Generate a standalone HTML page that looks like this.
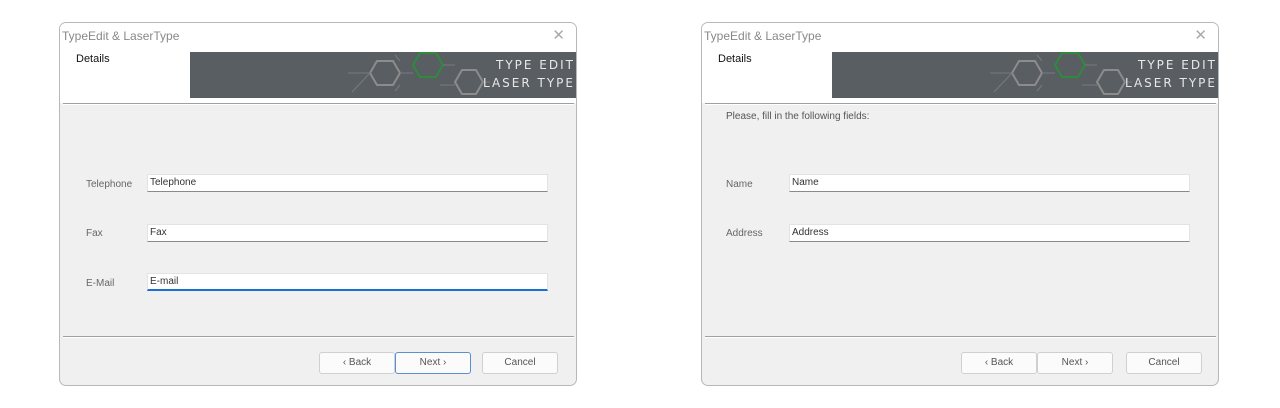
<!DOCTYPE html>
<html><head><style>
*{margin:0;padding:0;box-sizing:border-box}
body{width:1280px;height:408px;background:#fff;position:relative;font-family:"Liberation Sans",sans-serif;overflow:hidden}
.dlg{position:absolute;top:22px;width:518px;height:364px;border:1px solid #b8b8b8;border-radius:7px;background:#f0f0f0;overflow:hidden}
.title{position:absolute;left:0;top:0;width:100%;height:28px;background:#fff;font-size:12px;color:#888;padding:6px 0 0 2px}
.x{position:absolute;right:11px;top:3px;font-size:15px;color:#aaa;font-weight:300}
.hdr{position:absolute;left:0;top:28px;width:100%;height:52px;background:#fff}
.det{position:absolute;left:16px;top:30px;font-size:11px;color:#111}
.ban{position:absolute;left:130px;top:29px;width:388px;height:46px;background:#595e63}
.sep{position:absolute;left:3px;width:511px;height:2px;border-top:1px solid #a0a0a0;border-bottom:1px solid #fff}
.lbl{position:absolute;font-size:10px;color:#666}
.inp{position:absolute;left:87px;width:401px;height:18px;background:#fff;border:1px solid #e3e3e3;border-bottom:1px solid #8a8a8a;font-size:10px;color:#333;padding:2px 2px}
.btn{position:absolute;top:329px;width:76px;height:22px;background:#fbfbfb;border:1px solid #d0d0d0;border-radius:3px;font-size:10px;color:#555;text-align:center;line-height:20px}
.bt{position:absolute;right:3px;font-family:"DejaVu Sans",sans-serif;font-size:12px;color:#e8e8e8;letter-spacing:2px}
</style></head><body>

<div class="dlg" style="left:59px">
 <div class="title">TypeEdit &amp; LaserType</div><div class="x">✕</div>
 <div class="hdr"></div>
 <div class="det">Details</div>
 <div class="ban">
  <svg width="388" height="46" style="position:absolute;left:0;top:0" fill="none" stroke-width="2">
   <polygon points="180,21 187,9 203,9 210,21 203,33 187,33" stroke="#8c8c8c"/>
   <polygon points="223,13 230,1 246,1 253,13 246,25 230,25" stroke="#2f8a3c"/>
   <polygon points="265,30 272,18 286,18 293,30 286,42 272,42" stroke="#8c8c8c"/>
   <path d="M158,21H180M210,21H223M253,13H265M250,33H265M162,40L180,21M293,30H300M205,3L210,9M205,39L210,33" stroke="#767b80" stroke-width="1"/>
  </svg>
  <div class="bt" style="top:6px">TYPE EDIT</div>
  <div class="bt" style="top:24px">LASER TYPE</div>
 </div>
 <div class="sep" style="top:80px"></div>
 <div class="lbl" style="left:26px;top:156px">Telephone</div>
 <div class="inp" style="top:151px">Telephone</div>
 <div class="lbl" style="left:26px;top:205px">Fax</div>
 <div class="inp" style="top:201px">Fax</div>
 <div class="lbl" style="left:26px;top:255px">E-Mail</div>
 <div class="inp" style="top:250px;border-bottom:2px solid #1a6fd0">E-mail</div>
 <div class="sep" style="top:313px"></div>
 <div class="btn" style="left:259px">‹ Back</div>
 <div class="btn" style="left:335px;border-color:#5a8fd0">Next ›</div>
 <div class="btn" style="left:422px">Cancel</div>
</div>

<div class="dlg" style="left:701px">
 <div class="title">TypeEdit &amp; LaserType</div><div class="x">✕</div>
 <div class="hdr"></div>
 <div class="det">Details</div>
 <div class="ban">
  <svg width="388" height="46" style="position:absolute;left:0;top:0" fill="none" stroke-width="2">
   <polygon points="180,21 187,9 203,9 210,21 203,33 187,33" stroke="#8c8c8c"/>
   <polygon points="223,13 230,1 246,1 253,13 246,25 230,25" stroke="#2f8a3c"/>
   <polygon points="265,30 272,18 286,18 293,30 286,42 272,42" stroke="#8c8c8c"/>
   <path d="M158,21H180M210,21H223M253,13H265M250,33H265M162,40L180,21M293,30H300M205,3L210,9M205,39L210,33" stroke="#767b80" stroke-width="1"/>
  </svg>
  <div class="bt" style="top:6px">TYPE EDIT</div>
  <div class="bt" style="top:24px">LASER TYPE</div>
 </div>
 <div class="sep" style="top:80px"></div>
 <div class="lbl" style="left:24px;top:88px;color:#555">Please, fill in the following fields:</div>
 <div class="lbl" style="left:24px;top:156px">Name</div>
 <div class="inp" style="top:151px">Name</div>
 <div class="lbl" style="left:24px;top:205px">Address</div>
 <div class="inp" style="top:201px">Address</div>
 <div class="sep" style="top:313px"></div>
 <div class="btn" style="left:259px">‹ Back</div>
 <div class="btn" style="left:335px">Next ›</div>
 <div class="btn" style="left:424px">Cancel</div>
</div>
</body></html>
